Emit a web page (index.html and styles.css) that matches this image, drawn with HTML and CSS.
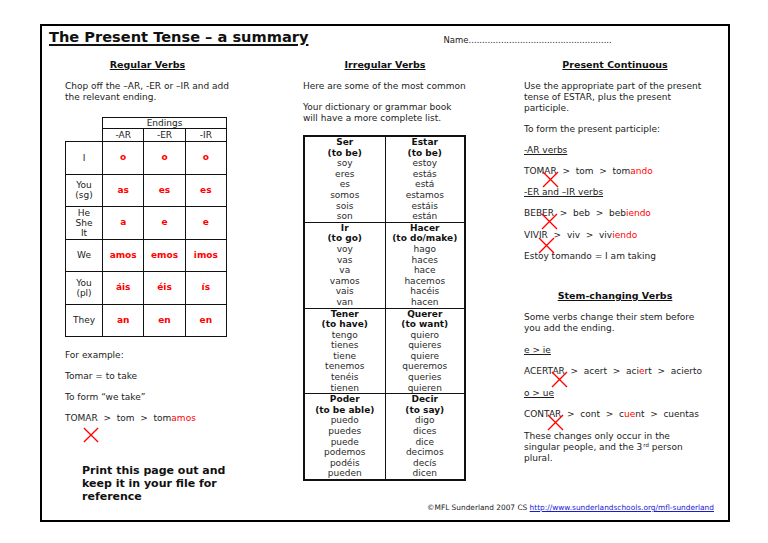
FILE: index.html
```html
<!DOCTYPE html>
<html>
<head>
<meta charset="utf-8">
<title>The Present Tense - a summary</title>
<link rel="stylesheet" href="styles.css">
</head>
<body>
<div class="page">
  <header class="top">
    <h1 class="title">The Present Tense – a summary</h1>
    <div class="name">Name.....................................................</div>
  </header>

  <div class="cols">
    <section class="col col-left">
      <h2 class="head">Regular Verbs</h2>
      <p class="p-first">Chop off the –AR, -ER or –IR and add the relevant ending.</p>
      <table class="endings">
        <tr class="r-endings"><td class="blank" rowspan="2"></td><td colspan="3" class="eh">Endings</td></tr>
        <tr class="r-cols"><td class="eh">-AR</td><td class="eh">-ER</td><td class="eh">-IR</td></tr>
        <tr class="r"><td class="pn">I</td><td class="e">o</td><td class="e">o</td><td class="e">o</td></tr>
        <tr class="r"><td class="pn">You<br>(sg)</td><td class="e">as</td><td class="e">es</td><td class="e">es</td></tr>
        <tr class="r"><td class="pn">He<br>She<br>It</td><td class="e">a</td><td class="e">e</td><td class="e">e</td></tr>
        <tr class="r"><td class="pn">We</td><td class="e">amos</td><td class="e">emos</td><td class="e">imos</td></tr>
        <tr class="r"><td class="pn">You<br>(pl)</td><td class="e">áis</td><td class="e">éis</td><td class="e">ís</td></tr>
        <tr class="r"><td class="pn">They</td><td class="e">an</td><td class="e">en</td><td class="e">en</td></tr>
      </table>
      <p class="p-ex">For example:</p>
      <p>Tomar = to take</p>
      <p>To form “we take”</p>
      <p><span class="xhost">TOMAR<svg class="cross cross-below" width="17" height="17" viewBox="0 0 17 17"><path d="M1 1 L16 16 M16 1 L1 16"/></svg></span>&nbsp; &gt; &nbsp;tom &nbsp;&gt; &nbsp;tom<span class="red">amos</span></p>
      <p class="print">Print this page out and keep it in your file for reference</p>
    </section>

    <section class="col col-mid">
      <h2 class="head">Irregular Verbs</h2>
      <p class="p-first">Here are some of the most common</p>
      <p>Your dictionary or grammar book will have a more complete list.</p>
      <table class="irr">
        <tr>
          <td><b>Ser<br>(to be)</b><br>soy<br>eres<br>es<br>somos<br>sois<br>son</td>
          <td><b>Estar<br>(to be)</b><br>estoy<br>estás<br>está<br>estamos<br>estáis<br>están</td>
        </tr>
        <tr>
          <td><b>Ir<br>(to go)</b><br>voy<br>vas<br>va<br>vamos<br>vais<br>van</td>
          <td><b>Hacer<br>(to do/make)</b><br>hago<br>haces<br>hace<br>hacemos<br>hacéis<br>hacen</td>
        </tr>
        <tr>
          <td><b>Tener<br>(to have)</b><br>tengo<br>tienes<br>tiene<br>tenemos<br>tenéis<br>tienen</td>
          <td><b>Querer<br>(to want)</b><br>quiero<br>quieres<br>quiere<br>queremos<br>queries<br>quieren</td>
        </tr>
        <tr>
          <td><b>Poder<br>(to be able)</b><br>puedo<br>puedes<br>puede<br>podemos<br>podéis<br>pueden</td>
          <td><b>Decir<br>(to say)</b><br>digo<br>dices<br>dice<br>decimos<br>decís<br>dicen</td>
        </tr>
      </table>
    </section>

    <section class="col col-right">
      <h2 class="head">Present Continuous</h2>
      <p class="p-first">Use the appropriate part of the present tense of ESTAR, plus the present participle.</p>
      <p>To form the present participle:</p>
      <p><u>-AR verbs</u></p>
      <p>TO<span class="xhost">MAR<svg class="cross cross-mid" width="17" height="17" viewBox="0 0 17 17"><path d="M1 1 L16 16 M16 1 L1 16"/></svg></span>&nbsp; &gt; &nbsp;tom &nbsp;&gt; &nbsp;tom<span class="red">ando</span></p>
      <p><u>-ER and –IR verbs</u></p>
      <p>BE<span class="xhost">BER<svg class="cross cross-mid" width="17" height="17" viewBox="0 0 17 17"><path d="M1 1 L16 16 M16 1 L1 16"/></svg></span>&nbsp; &gt; &nbsp;beb &nbsp;&gt; &nbsp;beb<span class="red">iendo</span></p>
      <p class="p-vivir">VI<span class="xhost">VIR<svg class="cross cross-low" width="17" height="17" viewBox="0 0 17 17"><path d="M1 1 L16 16 M16 1 L1 16"/></svg></span>&nbsp; &gt; &nbsp;viv &nbsp;&gt; &nbsp;viv<span class="red">iendo</span></p>
      <p>Estoy tomando = I am taking</p>

      <h2 class="head head-stem">Stem-changing Verbs</h2>
      <p class="p-first">Some verbs change their stem before you add the ending.</p>
      <p class="p-gap"><u>e &gt; ie</u></p>
      <p>ACER<span class="xhost">TAR<svg class="cross cross-tar" width="17" height="17" viewBox="0 0 17 17"><path d="M1 1 L16 16 M16 1 L1 16"/></svg></span>&nbsp; &gt; &nbsp;acert &nbsp;&gt; &nbsp;aci<span class="red">e</span>rt &nbsp;&gt; &nbsp;acierto</p>
      <p class="p-gap"><u>o &gt; ue</u></p>
      <p>CON<span class="xhost">TAR<svg class="cross cross-tar" width="17" height="17" viewBox="0 0 17 17"><path d="M1 1 L16 16 M16 1 L1 16"/></svg></span>&nbsp; &gt; &nbsp;cont &nbsp;&gt; &nbsp;c<span class="red">ue</span>nt &nbsp;&gt; &nbsp;cuentas</p>
      <p class="p-gap">These changes only occur in the singular people, and the 3<span class="sup">rd</span> person plural.</p>
    </section>
  </div>

  <footer class="foot">©MFL Sunderland 2007 CS <a href="#">http://www.sunderlandschools.org/mfl-sunderland</a></footer>
</div>
</body>
</html>
```

FILE: styles.css
```css
* { box-sizing: border-box; }

html, body {
  margin: 0;
  padding: 0;
  background: #fff;
}

body {
  font-family: "DejaVu Sans", Verdana, sans-serif;
  font-size: 9px;
  line-height: 11px;
  color: #1c1c1c;
}

.page {
  margin: 24px 0 0 40px;
  width: 690px;
  height: 498px;
  border: 2px solid #000;
  display: flex;
  flex-direction: column;
}

.top {
  display: flex;
  align-items: flex-end;
  height: 22px;
  padding: 0 0 0 7px;
}

.title {
  margin: 0;
  font-size: 14.6px;
  line-height: 18px;
  padding-bottom: 2px;
  font-weight: bold;
  text-decoration: underline;
  text-decoration-thickness: 1.5px;
  text-underline-offset: 2px;
  color: #111;
}

.name {
  margin-left: 135px;
  font-size: 8.5px;
  line-height: 11px;
  padding-bottom: 2px;
  color: #222;
}

.cols {
  display: grid;
  grid-template-columns: 165px 73px 164px 57px 182px;
  padding: 11px 0 0 23px;
}
.col-left { grid-column: 1; }
.col-mid { grid-column: 3; }
.col-right { grid-column: 5; }

.head {
  margin: 0;
  font-size: 9.5px;
  line-height: 12px;
  font-weight: bold;
  text-align: center;
  text-decoration: underline;
  color: #111;
}

p { margin: 10px 0 0; }
.p-first { margin-top: 10px; }

.red { color: #f00; }

/* regular endings table */
.endings {
  margin-top: 14px;
  width: 162px;
  border-collapse: collapse;
  table-layout: fixed;
  text-align: center;
}
.endings td {
  border: 1.5px solid #111;
  padding: 0;
}
.endings td.blank {
  border-top: none;
  border-left: none;
  width: 37px;
}
.endings .r-endings td { height: 11px; line-height: 10px; }
.endings .r-cols td { height: 13px; line-height: 11px; }
.endings .r td { height: 32.5px; }
.endings td.pn { line-height: 10px; color: #222; }
.endings td.e { color: #f00; font-weight: bold; }

.p-ex { margin-top: 13px; }

.xhost { position: relative; }
.cross {
  position: absolute;
  overflow: visible;
}
.cross path {
  stroke: #f00;
  stroke-width: 1.4;
  fill: none;
}
.cross-below { left: 18px; top: 14px; width: 16px; height: 16px; }
.cross-mid { left: 5px; top: 5px; }
.cross-low { left: 5px; top: 7px; }
.cross-tar { left: 3px; top: 5px; }

.print {
  margin-top: 40px;
  padding-left: 17px;
  font-size: 11px;
  line-height: 13px;
  font-weight: bold;
  color: #111;
}

/* irregular table */
.irr {
  margin-top: 11px;
  width: 163px;
  border-collapse: collapse;
  table-layout: fixed;
  border: 2px solid #111;
  text-align: center;
}
.irr td {
  border: 1px solid #111;
  padding: 0;
  line-height: 10.6px;
  vertical-align: top;
  color: #2a2a2a;
}
.irr td:first-child { width: 81px; }
.irr b { color: #111; }

.head-stem { margin-top: 28px; }
.p-gap { margin-top: 11px; }
.p-vivir { margin-top: 11px; }

.sup {
  display: inline-block;
  margin-left: 1px;
  font-size: 5.5px;
  line-height: 6px;
  vertical-align: top;
}

.foot {
  margin-top: auto;
  text-align: right;
  font-size: 7.4px;
  line-height: 10px;
  padding: 0 14px 7px 0;
  color: #222;
}
.foot a { color: #1a1ad0; }
```
